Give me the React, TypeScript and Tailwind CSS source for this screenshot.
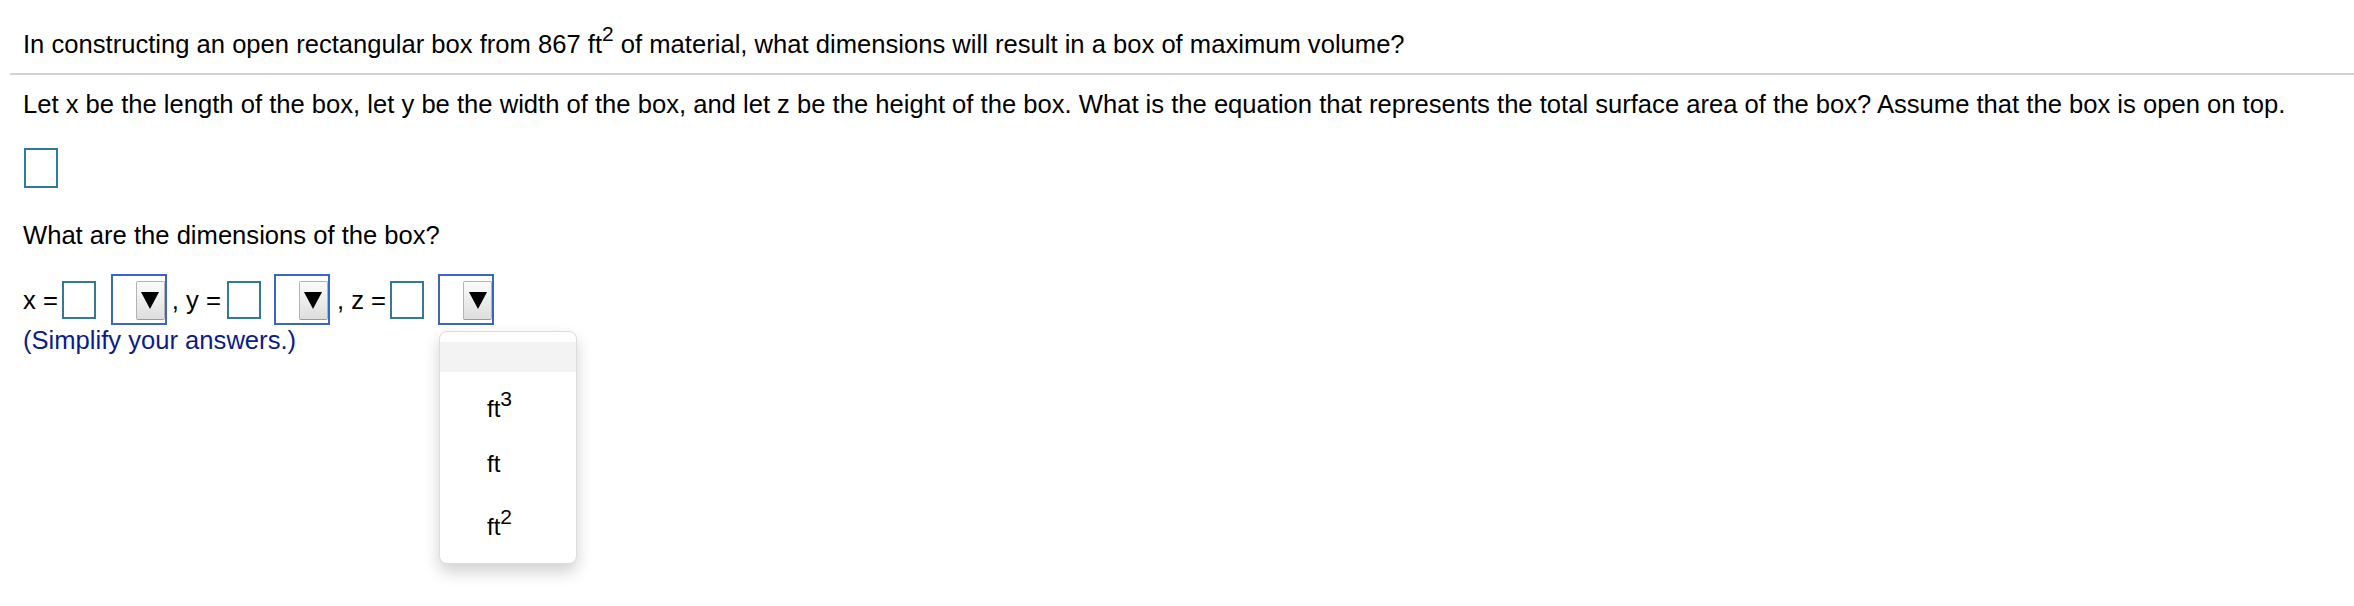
import { ReactNode } from 'react';

function AnswerBox({ className = '' }: { className?: string }) {
  return <div className={`w-[34px] h-[38px] border-2 border-[#317a9c] bg-white shrink-0 ${className}`} />;
}

function UnitSelect({ className = '', children }: { className?: string; children?: ReactNode }) {
  return (
    <div className={`relative w-[56px] h-[51px] border-2 border-[#3a66c7] flex items-center justify-end shrink-0 ${className}`}>
      <div className="mt-[2px] w-[29px] h-[39px] border border-[#b3b3b3] border-b-[#9a9a9a] rounded-[2px] bg-gradient-to-b from-[#fbfbfb] to-[#dedede] flex items-center justify-center">
        <svg width="18" height="17" viewBox="0 0 18 17">
          <polygon points="0,0 18,0 9,17" fill="#000" />
        </svg>
      </div>
      {children}
    </div>
  );
}

function Sup({ children, className = '' }: { children: ReactNode; className?: string }) {
  return <span className={`relative leading-none ${className}`}>{children}</span>;
}

export default function App() {
  return (
    <div className="w-[2354px] h-[606px] bg-white text-black font-['Liberation_Sans',Arial,sans-serif] text-[25.6px] leading-[30px]">
      {/* Question header */}
      <div className="ml-[10px] border-b-2 border-[#cdd2dc] pt-[29px] pb-[14px] pl-[13px]">
        In constructing an open rectangular box from 867 ft
        <Sup className="-top-[12px] text-[21px]">2</Sup> of material, what dimensions will result in a box of maximum
        volume?
      </div>

      <div className="pl-[23px] pt-[14px]">
        <p>
          Let x be the length of the box, let y be the width of the box, and let z be the height of the box. What is the
          equation that represents the total surface area of the box? Assume that the box is open on top.
        </p>

        <div className="mt-[29px] ml-[1px] w-[34px] h-[40px] border-2 border-[#317a9c]" />

        <p className="mt-[32px]">What are the dimensions of the box?</p>

        <div className="mt-[24px] h-[51px] flex items-center whitespace-pre">
          <span>x =</span>
          <AnswerBox className="ml-[4px]" />
          <UnitSelect className="ml-[15px]" />
          <span className="ml-[5px]">, y =</span>
          <AnswerBox className="ml-[6px]" />
          <UnitSelect className="ml-[13px]" />
          <span className="ml-[7px]">, z =</span>
          <AnswerBox className="ml-[4px]" />
          <UnitSelect className="ml-[14px]">
            {/* open dropdown list */}
            <div className="absolute left-[-1px] top-[calc(100%+8px)] z-10 w-[138px] h-[233px] rounded-[8px] border border-[#dcdcdc] bg-white shadow-[0_8px_16px_rgba(0,0,0,0.18)] pt-[10px] text-[24px] leading-[30px] whitespace-normal">
              <div className="h-[30px] bg-[#f3f3f3]" />
              <div className="mt-[22px] pl-[47px]">
                ft<Sup className="-top-[11px] text-[21px]">3</Sup>
              </div>
              <div className="mt-[25px] pl-[47px]">ft</div>
              <div className="mt-[33px] pl-[47px]">
                ft<Sup className="-top-[11px] text-[21px]">2</Sup>
              </div>
            </div>
          </UnitSelect>
        </div>

        <p className="text-[#0c1c8c]">(Simplify your answers.)</p>
      </div>
    </div>
  );
}
